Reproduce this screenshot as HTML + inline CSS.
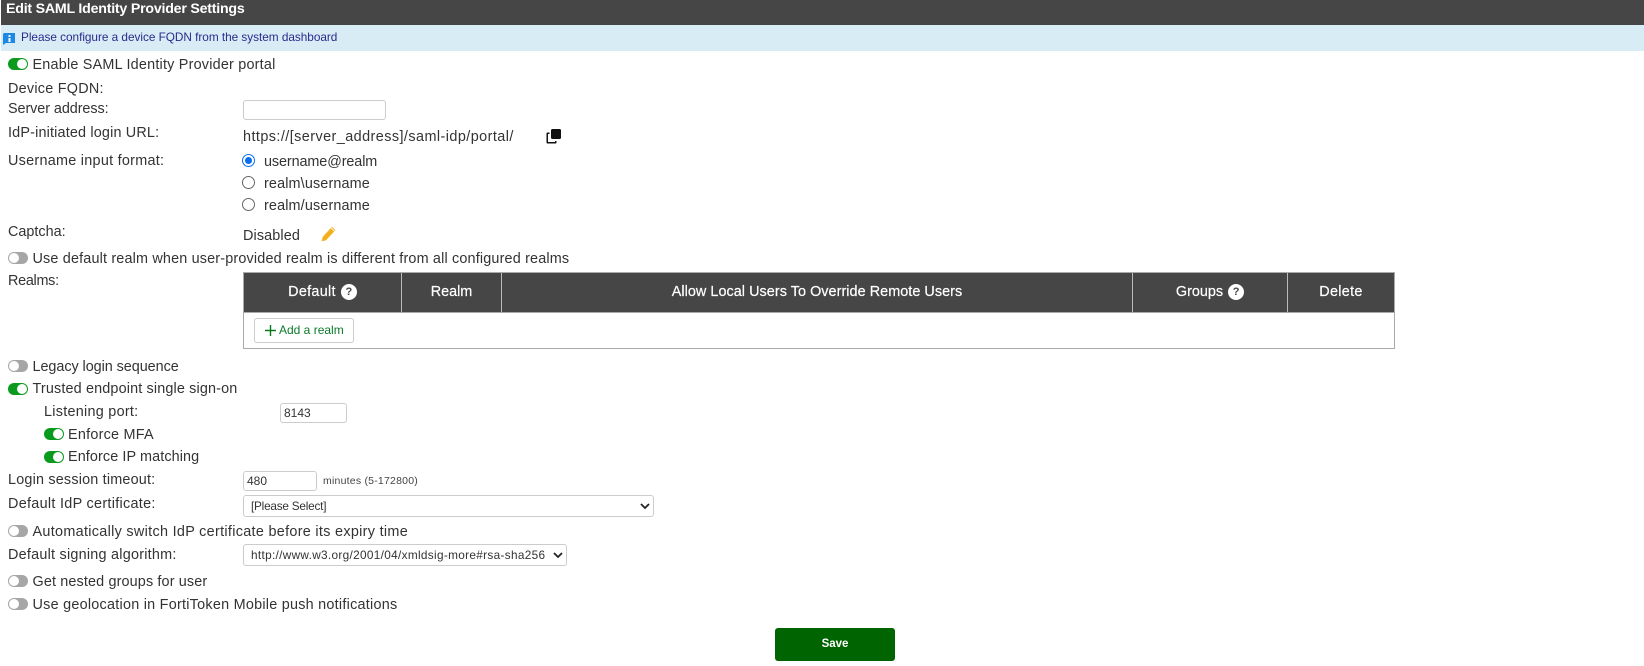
<!DOCTYPE html>
<html><head><meta charset="utf-8"><style>
html,body{margin:0;padding:0;background:#fff}
body{width:1644px;height:666px;overflow:hidden;position:relative;font-family:"Liberation Sans",sans-serif;font-size:14.4px;color:#333}
.t{position:absolute;line-height:20px;height:20px;white-space:nowrap;margin-top:1px}
.b{position:absolute;box-sizing:border-box}
.tg{position:absolute;width:20px;height:12px;border-radius:6px;background:#a6a6a6}
.tg:after{content:"";position:absolute;left:1px;top:1px;width:10px;height:10px;border-radius:50%;background:#fff}
.tg.on{background:#0a9a1e}
.tg.on:after{left:auto;right:1px}
.in{position:absolute;box-sizing:border-box;background:#fff;border:1px solid #ccc;border-radius:3px;font-size:12px;line-height:18px;padding-left:3px;color:#333}
.r{position:absolute;box-sizing:border-box;width:13px;height:13px;border-radius:50%;border:1px solid #666;background:#fff}
.r.on{border:1.5px solid #0a6cf0}
.r.on:after{content:"";position:absolute;left:1.5px;top:1.5px;width:7px;height:7px;border-radius:50%;background:#0a6cf0}
.th{position:absolute;top:273px;height:39px;line-height:39px;color:#fff;text-align:center;white-space:nowrap;font-size:14.4px;-webkit-text-stroke:.2px #fff}
.sep{position:absolute;top:273px;height:39px;width:1px;background:#bbb}
.q{display:inline-block;width:16px;height:16px;border-radius:50%;background:#fff;color:#464646;font-size:11px;font-weight:bold;line-height:16px;text-align:center;vertical-align:1px;margin-left:5px;letter-spacing:0;-webkit-text-stroke:0}
svg{position:absolute}
</style></head><body>
<div class="b" style="left:1px;top:0;width:1643px;height:25px;background:#464646"></div>
<div class="t" style="left:6px;top:-2px;color:#fff;font-weight:bold;font-size:14.2px;letter-spacing:-.22px;line-height:20px">Edit SAML Identity Provider Settings</div>
<div class="b" style="left:1px;top:25px;width:1643px;height:26px;background:#d8ecf6"></div>
<svg style="left:3px;top:33px" width="13" height="12" viewBox="0 0 13 12"><path d="M1 0h11v10H3l-3 2V1z" fill="#1e88e5"/><rect x="5.5" y="2" width="2" height="2" fill="#fff"/><rect x="5.5" y="5" width="2" height="4" fill="#fff"/></svg>
<div class="t" style="left:21px;top:26px;color:#2b2a8c;font-size:11.8px;letter-spacing:-.03px">Please configure a device FQDN from the system dashboard</div>

<div class="tg on" style="left:8px;top:58px"></div><div class="t" style="left:32.5px;top:54px;letter-spacing:.21px">Enable SAML Identity Provider portal</div>
<div class="t" style="left:8px;top:78px;letter-spacing:.25px">Device FQDN:</div>
<div class="t" style="left:8px;top:98px;letter-spacing:-.07px">Server address:</div>
<div class="in" style="left:243px;top:100px;width:143px;height:20px"></div>
<div class="t" style="left:8px;top:122px;letter-spacing:.17px">IdP-initiated login URL:</div>
<div class="t" style="left:243px;top:126px;letter-spacing:.44px">https://[server_address]/saml-idp/portal/</div>
<svg style="left:546px;top:129px" width="15" height="15" viewBox="0 0 15 15"><rect x="5" y="0" width="10" height="10" rx="1.5" fill="#111"/><path d="M3.5 3.5H1.5a1 1 0 0 0-1 1v9a1 1 0 0 0 1 1h8a1 1 0 0 0 1-1v-1.5H9v1H2V5h1.5z" fill="#111"/></svg>
<div class="t" style="left:8px;top:150px;letter-spacing:.27px">Username input format:</div>
<div class="r on" style="left:242px;top:154px"></div><div class="t" style="left:264px;top:151px;letter-spacing:-.1px">username@realm</div>
<div class="r" style="left:242px;top:176px"></div><div class="t" style="left:264px;top:173px;letter-spacing:.14px">realm\username</div>
<div class="r" style="left:242px;top:198px"></div><div class="t" style="left:264px;top:195px;letter-spacing:.14px">realm/username</div>
<div class="t" style="left:8px;top:221px">Captcha:</div>
<div class="t" style="left:243px;top:225px;letter-spacing:.12px">Disabled</div>
<svg style="left:321px;top:226px" width="15" height="16" viewBox="0 0 15 16"><path d="M11 .8l3.4 3.4-9.4 10L.6 15.4l1.2-4.6z" fill="#f2b01e"/><path d="M10 1.8l3.4 3.4" stroke="#fff" stroke-width=".8"/></svg>
<div class="tg" style="left:8px;top:252px"></div><div class="t" style="left:32.5px;top:248px;letter-spacing:.17px">Use default realm when user-provided realm is different from all configured realms</div>
<div class="t" style="left:8px;top:270px;letter-spacing:-.28px">Realms:</div>

<div class="b" style="left:243px;top:272px;width:1152px;height:77px;border:1px solid #aaa;background:#fff"></div>
<div class="b" style="left:244px;top:273px;width:1150px;height:39px;background:#464646"></div>
<div class="b" style="left:244px;top:312px;width:1150px;height:1px;background:#aaa"></div>
<div class="sep" style="left:401px"></div><div class="sep" style="left:501px"></div><div class="sep" style="left:1132px"></div><div class="sep" style="left:1287px"></div>
<div class="th" style="left:244px;width:157px;letter-spacing:.3px">Default<span class="q">?</span></div>
<div class="th" style="left:402px;width:99px">Realm</div>
<div class="th" style="left:502px;width:630px;letter-spacing:.05px">Allow Local Users To Override Remote Users</div>
<div class="th" style="left:1133px;width:154px">Groups<span class="q">?</span></div>
<div class="th" style="left:1288px;width:106px;letter-spacing:.3px">Delete</div>
<div class="b" style="left:254px;top:318px;width:100px;height:25px;border:1px solid #ccc;border-radius:3px;background:#fff"></div>
<svg style="left:265px;top:325px" width="11" height="11" viewBox="0 0 11 11"><path d="M5.5 0v11M0 5.5h11" stroke="#0a7a1e" stroke-width="1.4"/></svg>
<div class="t" style="left:279px;top:319px;color:#0a7a2a;font-size:12px">Add a realm</div>

<div class="tg" style="left:8px;top:360px"></div><div class="t" style="left:32.5px;top:356px;letter-spacing:-.05px">Legacy login sequence</div>
<div class="tg on" style="left:8px;top:383px"></div><div class="t" style="left:32.5px;top:378px;letter-spacing:.15px">Trusted endpoint single sign-on</div>
<div class="t" style="left:44px;top:401px;letter-spacing:.27px">Listening port:</div>
<div class="in" style="left:280px;top:403px;width:67px;height:20px">8143</div>
<div class="tg on" style="left:44px;top:428px"></div><div class="t" style="left:68px;top:424px;letter-spacing:.24px">Enforce MFA</div>
<div class="tg on" style="left:44px;top:451px"></div><div class="t" style="left:68px;top:446px;letter-spacing:.1px">Enforce IP matching</div>
<div class="t" style="left:8px;top:469px;letter-spacing:.19px">Login session timeout:</div>
<div class="in" style="left:243px;top:471px;width:74px;height:20px">480</div>
<div class="t" style="left:323px;top:470px;font-size:10.5px;color:#444;letter-spacing:.22px">minutes (5-172800)</div>
<div class="t" style="left:8px;top:493px;letter-spacing:.3px">Default IdP certificate:</div>
<div class="in" style="left:243px;top:495px;width:411px;height:22px;padding-left:7px;line-height:21px;font-size:11.8px;letter-spacing:-.23px">[Please Select]</div>
<svg style="left:640px;top:503px" width="10" height="7" viewBox="0 0 10 7"><path d="M1 1l4 4 4-4" fill="none" stroke="#222" stroke-width="1.8"/></svg>
<div class="tg" style="left:8px;top:525px"></div><div class="t" style="left:32.5px;top:521px;letter-spacing:.31px">Automatically switch IdP certificate before its expiry time</div>
<div class="t" style="left:8px;top:544px;letter-spacing:.24px">Default signing algorithm:</div>
<div class="in" style="left:243px;top:544px;width:324px;height:22px;padding-left:7px;line-height:21px;font-size:11.8px;letter-spacing:.32px">http://www.w3.org/2001/04/xmldsig-more#rsa-sha256</div>
<svg style="left:553px;top:552px" width="10" height="7" viewBox="0 0 10 7"><path d="M1 1l4 4 4-4" fill="none" stroke="#222" stroke-width="1.8"/></svg>
<div class="tg" style="left:8px;top:575px"></div><div class="t" style="left:32.5px;top:571px;letter-spacing:.14px">Get nested groups for user</div>
<div class="tg" style="left:8px;top:598px"></div><div class="t" style="left:32.5px;top:594px;letter-spacing:.25px">Use geolocation in FortiToken Mobile push notifications</div>
<div class="b" style="left:775px;top:628px;width:120px;height:33px;background:#006400;border-radius:3px;color:#fff;font-weight:bold;font-size:11.5px;line-height:33px;text-align:center">Save</div>
</body></html>
